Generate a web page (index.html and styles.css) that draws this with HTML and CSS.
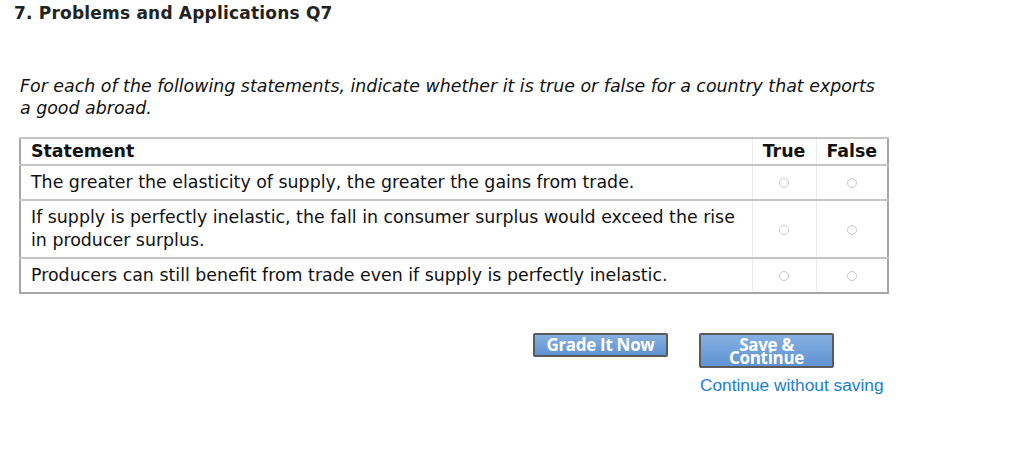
FILE: index.html
```html
<!doctype html>
<html>
<head>
<meta charset="utf-8">
<title>Problems and Applications Q7</title>
<link rel="stylesheet" href="styles.css">
</head>

<body>
<h1 class="title">7. Problems and Applications Q7</h1>
<div class="content">
	<p class="intro">For each of the following statements, indicate whether it is true or false for a country that exports a good abroad.</p>
	<table class="quiz">
		<col class="c_stmt">
		<col class="c_true">
		<col class="c_false">
		<tr class="head">
			<th class="stmt">Statement</th>
			<th class="opt">True</th>
			<th class="opt">False</th>
		</tr>
		<tr>
			<td class="stmt">The greater the elasticity of supply, the greater the gains from trade.</td>
			<td class="opt"><span class="radio"></span></td>
			<td class="opt"><span class="radio"></span></td>
		</tr>
		<tr>
			<td class="stmt">If supply is perfectly inelastic, the fall in consumer surplus would exceed the rise in producer surplus.</td>
			<td class="opt"><span class="radio"></span></td>
			<td class="opt"><span class="radio"></span></td>
		</tr>
		<tr>
			<td class="stmt">Producers can still benefit from trade even if supply is perfectly inelastic.</td>
			<td class="opt"><span class="radio"></span></td>
			<td class="opt"><span class="radio"></span></td>
		</tr>
	</table>
	<div class="actions">
		<div class="btn_col">
			<button class="btn grade">Grade It Now</button>
		</div>
		<div class="btn_col">
			<button class="btn save">Save &amp;<br>Continue</button>
			<a class="skip" href="#">Continue without saving</a>
		</div>
	</div>
</div>
</body>
</html>
```

FILE: styles.css
```css
*{margin:0; padding:0;}
body{background:#fff; color:#111; font-family:"DejaVu Sans", Verdana, sans-serif;}
.title{font-size:17px; font-weight:bold; color:#222; padding:3px 0 0 14px; line-height:20px; letter-spacing:0.2px;}
.content{padding:52px 0 0 19px;}
.intro{font-size:17.4px; font-style:italic; line-height:22px; width:870px; padding-left:1px;}
.quiz{margin-top:18px; width:870px; table-layout:fixed; border-collapse:collapse; border:2px solid #a6a6a6; font-size:17.4px;}
.c_stmt{width:732px;}
.c_true{width:64px;}
.c_false{width:72px;}
.quiz th, .quiz td{border-top:2px solid #c4c4c4; border-left:1px solid #ececec; line-height:23px;}
.quiz th{font-weight:bold; padding:1px 10px 1px 10px;}
.quiz td{padding:5px 10px;}
.quiz .stmt{text-align:left; border-left:none;}
.quiz .opt{text-align:center;}
.quiz th.opt{padding:1px 4px;}
.radio{display:inline-block; width:8px; height:8px; border:1px solid #c8c8c8; border-radius:50%; vertical-align:middle;}
.actions{display:flex; margin:39px 0 0 514px; gap:31px;}
.btn_col{display:flex; flex-direction:column; align-items:flex-start;}
.btn{font-family:"Open Sans", sans-serif; font-weight:bold; color:#fff; border:2px solid #5a5a5a; border-radius:2px; background:linear-gradient(#86afe0, #5f93d3); width:135px; letter-spacing:-0.3px;}
.grade{height:24px; font-size:17px; line-height:18px;}
.save{height:35px; font-size:17px; line-height:13px; padding-top:1px;}
.skip{margin:7px 0 0 1px; font-family:"Liberation Sans", Arial, sans-serif; font-size:17.3px; color:#1a7fd0; text-decoration:none;}
```
